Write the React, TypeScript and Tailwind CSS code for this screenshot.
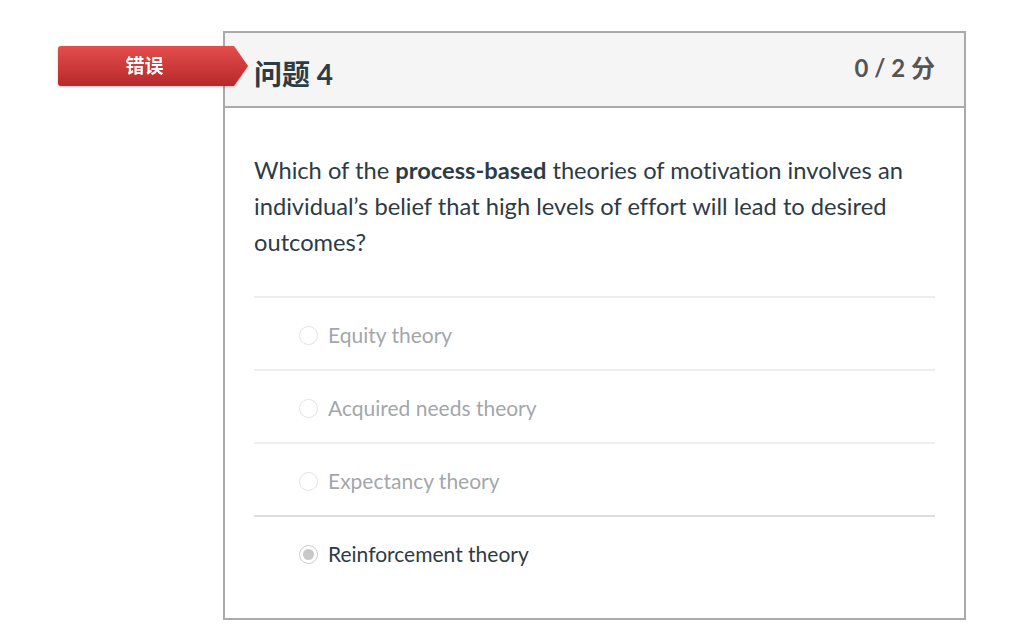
import React from "react";

const answers = [
   { label: "Equity theory", selected: false },
   { label: "Acquired needs theory", selected: false },
   { label: "Expectancy theory", selected: false },
   { label: "Reinforcement theory", selected: true },
];

function Ribbon() {
   return (
      <div className="absolute left-[-167px] top-[13px] flex h-[40px] w-[190px] items-stretch drop-shadow-[0_1px_1px_rgba(0,0,0,0.25)]">
         <div className="flex flex-1 items-center justify-center rounded-l-[3px] bg-gradient-to-b from-[#e44d4d] to-[#b8282a] pl-[8px] pr-[10px] text-[19px] font-bold text-white">
            错误
         </div>
         <svg width="15" height="40" viewBox="0 0 15 40" className="block">
            <defs>
               <linearGradient id="rg" x1="0" y1="0" x2="0" y2="1">
                  <stop offset="0" stopColor="#e44d4d" />
                  <stop offset="1" stopColor="#b8282a" />
               </linearGradient>
            </defs>
            <polygon points="0,0 1,0 15,20 1,40 0,40" fill="url(#rg)" />
         </svg>
      </div>
   );
}

export default function App() {
   return (
      <div
         className="min-h-[634px] bg-white pl-[223px] pt-[31px] [font-variant-ligatures:none]"
         style={{ fontFamily: 'Lato, "Noto Sans CJK SC", sans-serif' }}
      >
         <div className="relative w-[743px] border-2 border-[#aaaaaa] bg-white">
            <Ribbon />
            <div className="flex h-[75px] items-start justify-between border-b-2 border-[#aaaaaa] bg-[#f5f5f5] pl-[29px] pr-[29px]">
               <h2 className="mt-[23px] text-[28px] font-bold leading-[36px] text-[#2d3b45]">
                  问题 4
               </h2>
               <div className="mt-[19px] text-[24px] font-bold leading-[32px] text-[#555555]">
                  0 / 2 分
               </div>
            </div>
            <div className="px-[29px] pb-[30px] pt-[44px]">
               <p className="text-[23.7px] leading-[36px] text-[#2d3b45]">
                  Which of the <strong>process-based</strong> theories of motivation
                  involves an individual’s belief that high levels of effort will
                  lead to desired outcomes?
               </p>
               <ul className="mt-[36px]">
                  {answers.map((a, i) => (
                     <li
                        key={a.label}
                        className={
                           "flex h-[73px] items-center gap-[10px] pl-[45px] pt-[3px] " +
                           (i === 3
                              ? "border-t-2 border-[#dddddd]"
                              : "border-t-2 border-[#eeeeee]")
                        }
                     >
                        <span
                           className={
                              "flex h-[19px] w-[19px] items-center justify-center rounded-full border " +
                              (a.selected ? "border-[#cccccc] bg-white" : "border-[#e3e3e3] bg-white")
                           }
                        >
                           {a.selected && (
                              <span className="h-[11px] w-[11px] rounded-full bg-[#c8c8c8]" />
                           )}
                        </span>
                        <span
                           className={
                              "text-[21px] leading-[28px] " +
                              (a.selected ? "text-[#2d3b45]" : "text-[#a3a7ab]")
                           }
                        >
                           {a.label}
                        </span>
                     </li>
                  ))}
               </ul>
            </div>
         </div>
      </div>
   );
}
